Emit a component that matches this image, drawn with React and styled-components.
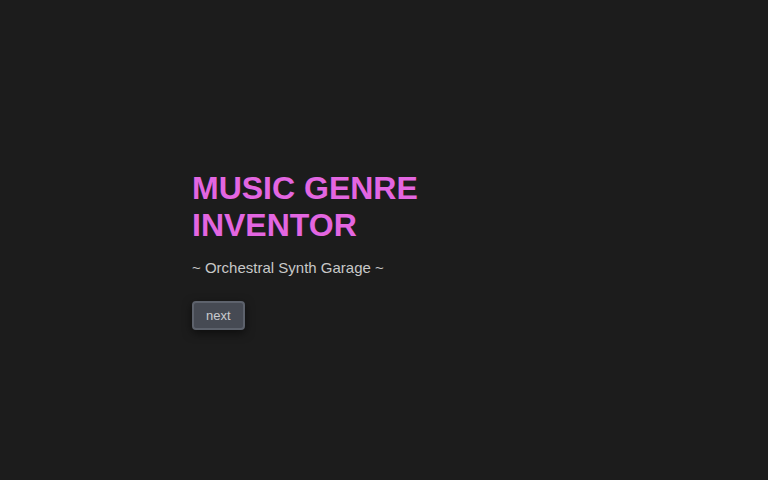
import React, { useState } from "react";
import styled, { createGlobalStyle } from "styled-components";

const GlobalStyle = createGlobalStyle`
  html, body {
    margin: 0;
    padding: 0;
    background: #1c1c1c;
    font-family: "Liberation Sans", Arial, sans-serif;
  }
`;

const Page = styled.main`
  box-sizing: border-box;
  min-height: 100vh;
  padding-top: 170px;
  display: flex;
  justify-content: center;
`;

const Column = styled.div`
  width: 384px;
  display: flex;
  flex-direction: column;
  align-items: flex-start;
`;

const Title = styled.h1`
  margin: 0;
  font-size: 32px;
  line-height: 37px;
  font-weight: 700;
  color: #e366e1;
`;

const Genre = styled.p`
  margin: 15px 0 0;
  font-size: 15px;
  line-height: 17px;
  color: #c8c8c8;
`;

const NextButton = styled.button`
  margin-top: 25px;
  height: 29px;
  padding: 0 12px;
  font-family: inherit;
  font-size: 13px;
  color: #c9cbd0;
  background: #464a53;
  border: 2px solid #5d626c;
  border-radius: 4px;
  box-shadow: 0 3px 10px rgba(0, 0, 0, 0.55);
  cursor: pointer;
`;

const genres = [
  "Orchestral Synth Garage",
  "Baroque Vaporwave",
  "Polka Drill",
  "Gregorian Trap",
];

export default function App() {
  const [i, setI] = useState(0);
  return (
    <>
      <GlobalStyle />
      <Page>
        <Column>
          <Title>MUSIC GENRE INVENTOR</Title>
          <Genre>~ {genres[i]} ~</Genre>
          <NextButton onClick={() => setI((i + 1) % genres.length)}>next</NextButton>
        </Column>
      </Page>
    </>
  );
}
